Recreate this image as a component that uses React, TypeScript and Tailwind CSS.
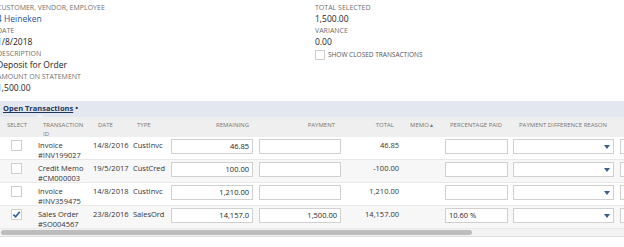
import React from 'react';

interface Txn {
    kind: string;
    num: string;
    date: string;
    type: string;
    remaining: string;
    payment: string;
    total: string;
    pct: string;
    checked: boolean;
}

const rows: Txn[] = [
    { kind: 'Invoice', num: '#INV199027', date: '14/8/2016', type: 'CustInvc', remaining: '46.85', payment: '', total: '46.85', pct: '', checked: false },
    { kind: 'Credit Memo', num: '#CM000003', date: '19/5/2017', type: 'CustCred', remaining: '100.00', payment: '', total: '-100.00', pct: '', checked: false },
    { kind: 'Invoice', num: '#INV359475', date: '14/8/2018', type: 'CustInvc', remaining: '1,210.00', payment: '', total: '1,210.00', pct: '', checked: false },
    { kind: 'Sales Order', num: '#SO004567', date: '23/8/2016', type: 'SalesOrd', remaining: '14,157.0', payment: '1,500.00', total: '14,157.00', pct: '10.60 %', checked: true },
];

const Field = ({ label, value, link }: { label: string; value: string; link?: boolean }) => (
    <div className="h-[23px] whitespace-nowrap">
        <div className="text-[7px] leading-[10px] text-[#6f6f6f] uppercase">{label}</div>
        <div className={`text-[8.5px] leading-[12px] ${link ? 'text-[#2a5597]' : 'text-[#222]'}`}>{value}</div>
    </div>
);

const Box = ({ value = '', w, right = true }: { value?: string; w: string; right?: boolean }) => (
    <div className={`${w} h-[15px] border border-[#d0d0d0] bg-white text-[7.5px] leading-[13px] px-[3px] text-[#222] whitespace-nowrap overflow-hidden ${right ? 'text-right' : 'text-left'}`}>
        {value}
    </div>
);

const Check = ({ checked }: { checked: boolean }) => (
    <div className="w-[11px] h-[11px] border border-[#cfcfcf] bg-white flex items-center justify-center">
        {checked && (
            <svg width="9" height="9" viewBox="0 0 10 10">
                <path d="M1.5 5.2 L4 7.6 L8.6 2" stroke="#2a5bb0" strokeWidth="1.8" fill="none" />
            </svg>
        )}
    </div>
);

export default function App() {
    return (
        <div className="w-[624px] h-[247px] bg-white overflow-hidden" style={{ fontFamily: '"Open Sans", "Liberation Sans", sans-serif' }}>
            <div className="flex pt-[3px] h-[101px]">
                <div className="w-[318px] shrink-0 ml-[-3px]">
                    <Field label="Customer, Vendor, Employee" value="4 Heineken" link />
                    <Field label="Date" value="1/8/2018" />
                    <Field label="Description" value="Deposit for Order" />
                    <Field label="Amount on Statement" value="1,500.00" />
                </div>
                <div className="flex-1">
                    <Field label="Total Selected" value="1,500.00" />
                    <Field label="Variance" value="0.00" />
                    <div className="flex items-center gap-[3px] mt-[1px]">
                        <div className="w-[10px] h-[10px] border border-[#cfcfcf]" />
                        <span className="text-[6.5px] text-[#555] uppercase">Show closed transactions</span>
                    </div>
                </div>
            </div>

            <div className="bg-[#e2e7f0] h-[16px] flex items-end">
                <div className="relative h-[16px] pl-[3px] pr-[4px] flex items-center whitespace-nowrap">
                    <span className="text-[7.5px] font-bold text-[#1e3658] underline">Open Transactions</span>
                    <span className="text-[7.5px] font-bold text-[#1e3658] ml-[2px]">•</span>
                    <div className="absolute left-[36px] bottom-0 w-0 h-0 border-l-[4px] border-r-[4px] border-b-[3px] border-l-transparent border-r-transparent border-b-[#f0f0f0]" />
                </div>
            </div>

            <div className="w-[700px] text-[#222] whitespace-nowrap">
                <div className="flex h-[20px] bg-[#efefef] text-[6px] leading-[9px] text-[#777] uppercase pt-[4px]">
                    <div className="w-[33px] shrink-0 pl-[7px]">Select</div>
                    <div className="w-[57px] shrink-0 pl-[10px]">Transaction<br />ID</div>
                    <div className="w-[40px] shrink-0 pl-[8px]">Date</div>
                    <div className="w-[38px] shrink-0 pl-[7px]">Type</div>
                    <div className="w-[88px] shrink-0 text-right pr-[7px]">Remaining</div>
                    <div className="w-[88px] shrink-0 text-right pr-[9px]">Payment</div>
                    <div className="w-[58px] shrink-0 text-right pr-[8px]">Total</div>
                    <div className="w-[40px] shrink-0 pl-[8px]">Memo ▴</div>
                    <div className="w-[68px] shrink-0 pl-[8px]">Percentage Paid</div>
                    <div className="w-[107px] shrink-0 pl-[9px]">Payment Difference Reason</div>
                    <div className="flex-1" />
                </div>
                {rows.map((r, i) => (
                    <div key={i} className={`flex h-[23px] pt-[2px] border-b border-[#e8e8e8] text-[7.5px] leading-[10px] ${i % 2 ? 'bg-[#f7f7f7]' : 'bg-white'}`}>
                        <div className="w-[33px] shrink-0 pl-[11px] pt-[1px]"><Check checked={r.checked} /></div>
                        <div className="w-[57px] shrink-0 pl-[5px] pt-[1px] text-[#333]">{r.kind}<br />{r.num}</div>
                        <div className="w-[40px] shrink-0 pl-[3px] pt-[1px] text-[#333]">{r.date}</div>
                        <div className="w-[38px] shrink-0 pl-[3px] pt-[1px] text-[#333]">{r.type}</div>
                        <div className="w-[88px] shrink-0 pl-[3px]"><Box value={r.remaining} w="w-[82px]" /></div>
                        <div className="w-[88px] shrink-0 pl-[3px]"><Box value={r.payment} w="w-[82px]" /></div>
                        <div className="w-[58px] shrink-0 text-right pr-[3px] pt-[1px] text-[#333]">{r.total}</div>
                        <div className="w-[40px] shrink-0" />
                        <div className="w-[68px] shrink-0 pl-[3px]"><Box value={r.pct} w="w-[63px]" right={false} /></div>
                        <div className="w-[107px] shrink-0 pl-[3px]">
                            <div className="w-[101px] h-[15px] border border-[#d0d0d0] bg-white flex items-center justify-end pr-[3px]">
                                <div className="w-0 h-0 border-l-[3.5px] border-r-[3.5px] border-t-[4px] border-l-transparent border-r-transparent border-t-[#3d5f8c]" />
                            </div>
                        </div>
                        <div className="shrink-0 pl-[3px]"><Box w="w-[40px]" /></div>
                    </div>
                ))}
                <div className="h-[8px] bg-[#f3f3f3] border-b border-[#dedede] flex items-center pl-[1px]">
                    <div className="w-[471px] h-[5px] rounded-full bg-[#bdbdbd]" />
                </div>
            </div>
        </div>
    );
}
